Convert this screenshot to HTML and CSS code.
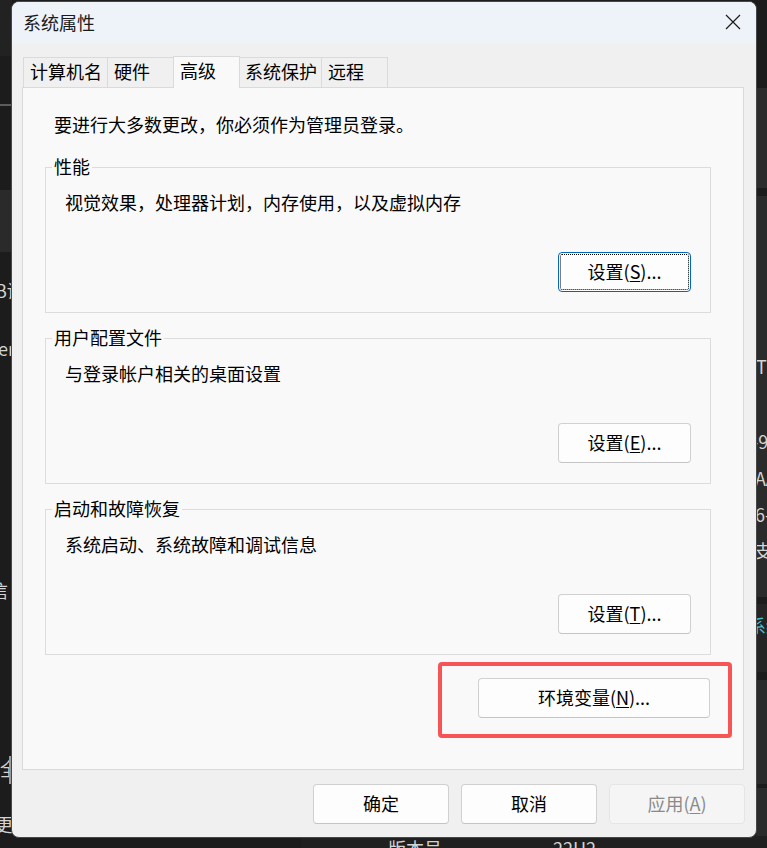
FILE: index.html
```html
<!DOCTYPE html>
<html lang="zh-CN">
<head>
<meta charset="utf-8">
<title>系统属性</title>
<link rel="stylesheet" href="styles.css">
</head>
<body>
<div class="backdrop">
  <div class="bd l-top"></div>
  <div class="bd l-line"></div>
  <div class="bd l-mid"></div>
  <span class="bd txt t-l1">B设</span>
  <span class="bd txt t-l2">er</span>
  <span class="bd txt t-l3">信</span>
  <span class="bd txt t-l4">安全</span>
  <div class="bd l-bar"></div>
  <span class="bd txt t-l5">更</span>
  <div class="bd r-b1"></div>
  <div class="bd r-b2"></div>
  <div class="bd r-b3"></div>
  <div class="bd r-b4"></div>
  <div class="bd r-b5"></div>
  <span class="bd txt t-r1">T</span>
  <span class="bd txt t-r2">-9</span>
  <span class="bd txt t-r3">AA</span>
  <span class="bd txt t-r4">6-</span>
  <span class="bd txt t-r5">支</span>
  <span class="bd txt t-r6">系统</span>
  <div class="bd b-band"></div>
  <span class="bd txt t-b1">版本号</span>
  <span class="bd txt t-b2">22H2</span>
</div>

<div class="dialog">
  <div class="titlebar">
    <span class="title">系统属性</span>
    <svg class="close" width="16" height="16" viewBox="0 0 16 16" aria-hidden="true">
      <path d="M1 1 L15 15 M15 1 L1 15" stroke="#1b1b1b" stroke-width="1.2" fill="none"/>
    </svg>
  </div>
  <div class="content">
    <div class="tabs">
      <div class="tab">计算机名</div>
      <div class="tab">硬件</div>
      <div class="tab active">高级</div>
      <div class="tab tab-wide">系统保护</div>
      <div class="tab">远程</div>
    </div>
    <div class="panel">
      <p class="intro">要进行大多数更改，你必须作为管理员登录。</p>

      <section class="group">
        <div class="group-title">性能</div>
        <p class="group-desc">视觉效果，处理器计划，内存使用，以及虚拟内存</p>
        <button class="btn btn-set focused">设置(<u>S</u>)...</button>
      </section>

      <section class="group">
        <div class="group-title">用户配置文件</div>
        <p class="group-desc">与登录帐户相关的桌面设置</p>
        <button class="btn btn-set">设置(<u>E</u>)...</button>
      </section>

      <section class="group">
        <div class="group-title">启动和故障恢复</div>
        <p class="group-desc">系统启动、系统故障和调试信息</p>
        <button class="btn btn-set">设置(<u>T</u>)...</button>
      </section>

      <div class="env-row">
        <div class="highlight">
          <button class="btn btn-env">环境变量(<u>N</u>)...</button>
        </div>
      </div>
    </div>
    <div class="footer">
      <button class="btn btn-foot">确定</button>
      <button class="btn btn-foot">取消</button>
      <button class="btn btn-foot disabled">应用(<u>A</u>)</button>
    </div>
  </div>
</div>
</body>
</html>
```
FILE: styles.css
```css
html, body {
  margin: 0;
  padding: 0;
}

body {
  position: relative;
  width: 767px;
  height: 848px;
  overflow: hidden;
  background: #1c1c1c;
  font-family: "Noto Sans CJK SC", "Noto Sans", sans-serif;
  font-size: 18px;
  color: #000;
}

/* ---------- desktop behind the dialog ---------- */
.backdrop {
  position: absolute;
  inset: 0;
  overflow: hidden;
}
.bd { position: absolute; }
.txt {
  color: #d4d4d4;
  font-size: 18px;
  line-height: 20px;
  white-space: nowrap;
}
.l-top { left: 0; top: 0; width: 12px; height: 56px; background: #222222; }
.l-line { left: 0; top: 104px; width: 12px; height: 2px; background: #5c5c5c; }
.l-mid { left: 0; top: 190px; width: 12px; height: 62px; background: #2a2a2a; }
.l-bar { left: 9px; top: 756px; width: 3px; height: 28px; background: #9a9a9a; }
.t-l1 { left: -5px; top: 280px; }
.t-l2 { left: -2px; top: 338px; }
.t-l3 { left: -10px; top: 580px; }
.t-l4 { left: -18px; top: 758px; }
.t-l5 { left: -5px; top: 814px; }

.r-b1 { left: 756px; top: 88px; width: 11px; height: 100px; background: #2c2c2c; }
.r-b2 { left: 756px; top: 196px; width: 11px; height: 401px; background: #2b2b2b; }
.r-b3 { left: 756px; top: 604px; width: 11px; height: 68px; background: #252525; }
.r-b4 { left: 756px; top: 680px; width: 11px; height: 104px; background: #2b2b2b; }
.r-b5 { left: 756px; top: 788px; width: 11px; height: 60px; background: #2b2b2b; }
.t-r1 { left: 756px; top: 356px; }
.t-r2 { left: 752px; top: 431px; }
.t-r3 { left: 755px; top: 468px; }
.t-r4 { left: 755px; top: 504px; }
.t-r5 { left: 754px; top: 540px; }
.t-r6 { left: 748px; top: 615px; color: #4cc2d6; }

.b-band { left: 301px; top: 836px; width: 466px; height: 12px; background: #202020; }
.t-b1 { left: 388px; top: 838px; }
.t-b2 { left: 553px; top: 838px; }

/* ---------- dialog ---------- */
.dialog {
  position: relative;
  z-index: 1;
  box-sizing: border-box;
  width: 746px;
  height: 837px;
  margin: 1px 0 0 11px;
  border: 1px solid #474747;
  border-radius: 8px;
  overflow: hidden;
  background: #f0f0f0;
}

.titlebar {
  height: 42px;
  display: flex;
  align-items: center;
  justify-content: space-between;
  padding: 0 15px 0 11px;
  background: #eef2f9;
}
.title {
  font-size: 18px;
  line-height: 20px;
  margin-top: -3px;
  color: #1b1b1b;
}
.close {
  display: block;
  margin-top: -2px;
}

.content {
  padding: 12px 12px 0 10px;
}

/* ---------- tabs ---------- */
.tabs {
  display: flex;
  align-items: flex-end;
  padding-left: 1px;
}
.tab {
  position: relative;
  box-sizing: border-box;
  min-width: 67px;
  height: 30px;
  padding: 0 5px 0 6px;
  margin-left: -1px;
  border: 1px solid #dadada;
  border-bottom: none;
  background: #f0f0f0;
  line-height: 26px;
  white-space: nowrap;
  color: #000;
}
.tab:first-child { margin-left: 0; }
.tab.tab-wide { padding: 0 4px 0 5px; }
.tab.active {
  z-index: 2;
  min-width: 67px;
  height: 32px;
  margin-bottom: -1px;
  line-height: 26px;
  background: #f9f9f9;
}

/* ---------- panel ---------- */
.panel {
  box-sizing: border-box;
  height: 683px;
  padding: 26px 32px 0 22px;
  border: 1px solid #dadada;
  background: #f9f9f9;
}
.intro {
  margin: 0 0 0 9px;
  line-height: 20px;
}

.group {
  box-sizing: border-box;
  height: 146px;
  margin-top: 25px;
  display: flex;
  flex-direction: column;
  border: 1px solid #dcdcdc;
}
.intro + .group { margin-top: 33px; }
.group-title {
  align-self: flex-start;
  margin: -12px 0 0 6px;
  padding: 0 2px;
  line-height: 20px;
  background: #f9f9f9;
}
.group-desc {
  margin: 16px 0 0 19px;
  line-height: 20px;
}

/* ---------- buttons ---------- */
.btn {
  box-sizing: border-box;
  height: 40px;
  padding: 0 0 2px;
  border: 1px solid #d0d0d0;
  border-bottom-color: #c4c4c4;
  border-radius: 4px;
  background: #fdfdfd;
  font-family: inherit;
  font-size: 18px;
  line-height: 20px;
  color: #000;
}
.btn u { text-underline-offset: 2px; text-decoration-thickness: 1px; }
.btn-set {
  align-self: flex-end;
  width: 133px;
  margin: 40px 19px 0 0;
}
.btn.focused {
  border: 1px solid #0067c0;
  outline: 1px dotted #000;
  outline-offset: -3px;
}

.env-row {
  display: flex;
  justify-content: flex-end;
  margin-top: 23px;
  margin-right: 1px;
}
.highlight {
  position: relative;
}
.highlight::after {
  content: "";
  position: absolute;
  top: -16px;
  right: -22px;
  bottom: -20px;
  left: -40px;
  border: 4px solid #f75555;
  border-radius: 4px;
  pointer-events: none;
}
.btn-env {
  display: block;
  width: 232px;
}

.footer {
  display: flex;
  justify-content: flex-end;
  gap: 12px;
  margin-top: 14px;
  margin-right: -1px;
}
.btn-foot {
  width: 136px;
}
.btn-foot.disabled {
  background: #f5f5f5;
  border-color: #e5e5e5;
  color: #8a8a8a;
}
```
